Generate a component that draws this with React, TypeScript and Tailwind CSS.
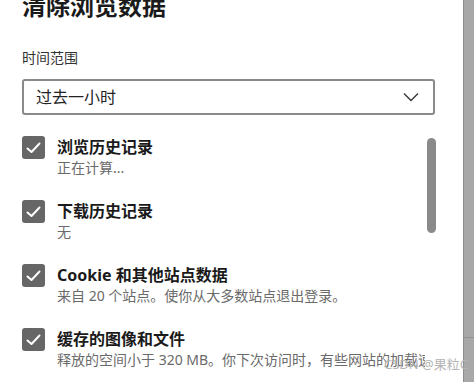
const font = { fontFamily: '"Noto Sans", "Noto Sans CJK SC", sans-serif' };

const items = [
  { title: "浏览历史记录", sub: "正在计算..." },
  { title: "下载历史记录", sub: "无" },
  { title: "Cookie 和其他站点数据", sub: "来自 20 个站点。使你从大多数站点退出登录。" },
  {
    title: "缓存的图像和文件",
    sub: "释放的空间小于 320 MB。你下次访问时，有些网站的加载速度可能会更慢。",
  },
];

function CheckBox() {
  return (
    <div className="w-[23px] h-[23px] rounded-[3px] bg-[#666666] flex items-center justify-center shrink-0">
      <svg width="15" height="12" viewBox="0 0 15 12" fill="none">
        <path d="M1.5 6.5 L5.5 10 L13.5 1.5" stroke="white" strokeWidth="2" strokeLinecap="round" strokeLinejoin="round" />
      </svg>
    </div>
  );
}

export default function App() {
  return (
    <div className="w-[474px] h-[382px] overflow-hidden flex bg-white relative" style={font}>
      <div className="flex-1 min-w-0 pl-[22px] pr-[28px] flex flex-col">
        <h1 className="text-[24px] leading-[32px] font-bold text-[#1a1a1a] -mt-[10px]">清除浏览数据</h1>

        <p className="mt-[26px] text-[14px] leading-[20px] text-[#333333]">时间范围</p>

        <div className="mt-[11px] h-[36px] border-2 border-[#8a8a8a] rounded-[3px] flex items-center justify-between pl-[12px] pr-[14px]">
          <span className="text-[16px] text-[#222222]">过去一小时</span>
          <svg width="16" height="10" viewBox="0 0 16 10" fill="none">
            <path d="M1 1.5 L8 8.5 L15 1.5" stroke="#333333" strokeWidth="1.3" />
          </svg>
        </div>

        <div className="mt-[21px] flex flex-col gap-[23px]">
          {items.map((it) => (
            <div key={it.title} className="flex gap-[12px] min-w-0">
              <CheckBox />
              <div className="flex flex-col min-w-0 flex-1 pr-[10px]">
                <span className="text-[16px] leading-[22px] font-bold text-[#1a1a1a] whitespace-nowrap">{it.title}</span>
                <span className="text-[14px] leading-[19px] text-[#6a6a6a] whitespace-nowrap overflow-hidden">{it.sub}</span>
              </div>
            </div>
          ))}
        </div>
      </div>

      <div className="w-[11px] h-full bg-[#a8a8a8] border-l border-[#8e8e8e] flex flex-col">
        <div className="h-[338px] border-b border-[#929292]" />
      </div>

      <div className="absolute left-[427px] top-[138px] w-[9px] h-[95px] rounded-full bg-[#8a8a8a]" />

      <span className="absolute left-[384px] top-[355px] text-[13px] text-[#b5b5b5]">CSDN @果粒C</span>
    </div>
  );
}
